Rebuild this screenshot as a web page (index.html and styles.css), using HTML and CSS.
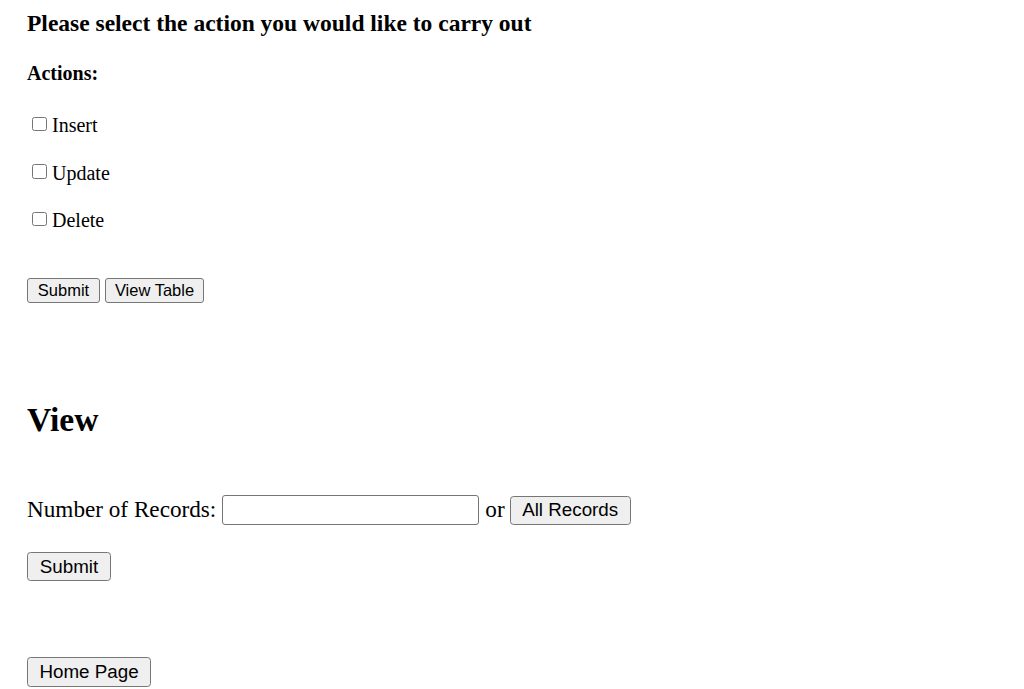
FILE: index.html
```html
<!DOCTYPE html>
<html lang="en">
<head>
<meta charset="utf-8">
<title>Actions</title>
<link rel="stylesheet" href="styles.css">
</head>
<body>
<div class="page">
  <form class="actions-form">
    <h3 class="title">Please select the action you would like to carry out</h3>
    <h4 class="actions-label">Actions:</h4>
    <div class="option"><input type="checkbox" class="check" id="ins"><label for="ins">Insert</label></div>
    <div class="option"><input type="checkbox" class="check" id="upd"><label for="upd">Update</label></div>
    <div class="option"><input type="checkbox" class="check" id="del"><label for="del">Delete</label></div>
    <div class="btn-row">
      <button type="button" class="btn btn-sm btn-submit">Submit</button>
      <button type="button" class="btn btn-sm btn-view">View Table</button>
    </div>
  </form>

  <form class="view-form">
    <h2 class="view-title">View</h2>
    <div class="records-row">
      <span class="records-label">Number of Records:</span>
      <input type="text" class="records-input">
      <span class="or">or</span>
      <button type="button" class="btn btn-lg btn-all">All Records</button>
    </div>
    <button type="button" class="btn btn-lg btn-submit2">Submit</button>
    <button type="button" class="btn btn-lg btn-home">Home Page</button>
  </form>
</div>
</body>
</html>
```

FILE: styles.css
```css
html, body {
  margin: 0;
  padding: 0;
  background: #ffffff;
  color: #000000;
}

.page {
  padding-left: 27px;
  font-family: "Liberation Serif", "Times New Roman", serif;
}

form {
  margin: 0;
}

.actions-form {
  display: flex;
  flex-direction: column;
  align-items: flex-start;
}

.title {
  margin: 10px 0 0 0;
  font-size: 23.5px;
  line-height: 26px;
  font-weight: bold;
}

.actions-label {
  margin: 26px 0 0 0;
  font-size: 20px;
  line-height: 23px;
  font-weight: bold;
}

.option {
  font-size: 20px;
  line-height: 23px;
  height: 23px;
  margin-top: 24.5px;
}

.actions-label + .option {
  margin-top: 29px;
}

.check {
  appearance: none;
  -webkit-appearance: none;
  display: inline-block;
  width: 15px;
  height: 14.5px;
  margin: 0 5px 0 5px;
  border: 1px solid #767676;
  border-radius: 2.5px;
  background: #ffffff;
  box-sizing: border-box;
  vertical-align: 1px;
}

.btn {
  font-family: "Liberation Sans", Arial, sans-serif;
  color: #000000;
  background: #efefef;
  border: 1px solid #767676;
  box-sizing: border-box;
  margin: 0;
  cursor: default;
}

.btn-sm {
  height: 25px;
  font-size: 16.5px;
  border-radius: 3px;
  padding: 0;
}

.btn-lg {
  height: 29px;
  font-size: 18.8px;
  border-radius: 3.5px;
  padding: 0;
}

.btn-row {
  display: flex;
  gap: 5px;
  margin-top: 46px;
}

.btn-submit {
  width: 73px;
}

.btn-view {
  width: 99px;
}

.view-form {
  display: flex;
  flex-direction: column;
  align-items: flex-start;
}

.view-title {
  margin: 98px 0 0 0;
  font-size: 33.6px;
  line-height: 38px;
  font-weight: bold;
}

.records-row {
  display: flex;
  align-items: center;
  height: 30px;
  margin-top: 56px;
  font-size: 23.2px;
  line-height: 26px;
}

.records-label {
  margin-bottom: 3px;
}

.records-input {
  width: 257px;
  height: 30px;
  margin: 0 0 0 6px;
  padding: 0 4px;
  border: 1px solid #767676;
  border-radius: 3px;
  box-sizing: border-box;
  background: #ffffff;
  font-size: 18px;
}

.or {
  margin: 0 5px 3px 6px;
}

.btn-all {
  width: 121px;
}

.btn-submit2 {
  width: 84px;
  margin-top: 27px;
}

.btn-home {
  width: 124px;
  height: 30px;
  margin-top: 76px;
}
```
